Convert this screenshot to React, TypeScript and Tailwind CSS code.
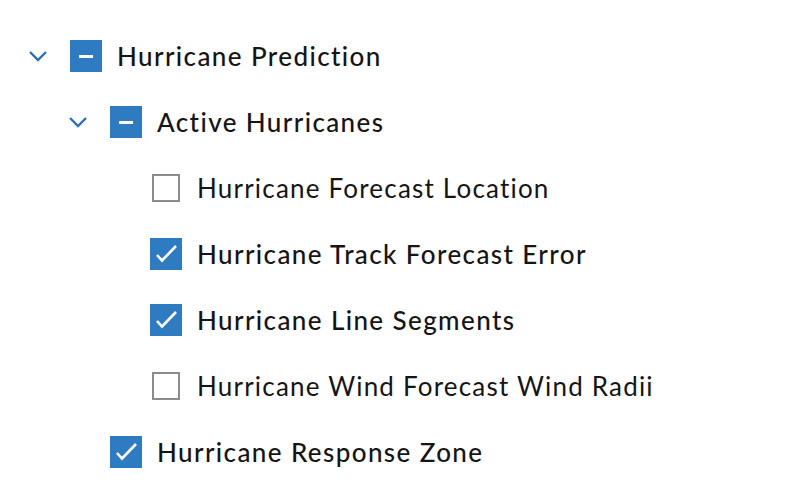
import React from "react";

type State = "checked" | "unchecked" | "mixed";

interface Row {
  label: string;
  level: number;
  state: State;
  expandable?: boolean;
}

const rows: Row[] = [
  { label: "Hurricane Prediction", level: 0, state: "mixed", expandable: true },
  { label: "Active Hurricanes", level: 1, state: "mixed", expandable: true },
  { label: "Hurricane Forecast Location", level: 2, state: "unchecked" },
  { label: "Hurricane Track Forecast Error", level: 2, state: "checked" },
  { label: "Hurricane Line Segments", level: 2, state: "checked" },
  { label: "Hurricane Wind Forecast Wind Radii", level: 2, state: "unchecked" },
  { label: "Hurricane Response Zone", level: 1, state: "checked" },
];

function Chevron() {
  return (
    <svg width="20" height="12" viewBox="0 0 20 12" fill="none" className="text-[#2f6fb5]">
      <path d="M2 2l8 8 8-8" stroke="currentColor" strokeWidth="2.4" />
    </svg>
  );
}

function Box({ state }: { state: State }) {
  if (state === "unchecked") {
    return (
      <div className="w-8 h-8 flex items-center justify-center">
        <div className="w-[28px] h-[28px] border-2 border-[#8c8c8c] bg-white" />
      </div>
    );
  }
  return (
    <div className="w-8 h-8 bg-[#2f7bc1] flex items-center justify-center">
      {state === "checked" ? (
        <svg width="32" height="32" viewBox="0 0 32 32" fill="none">
          <path d="M7 17l5 5.5L26 8" stroke="white" strokeWidth="2.6" />
        </svg>
      ) : (
        <div className="w-[14px] h-[3px] bg-white" />
      )}
    </div>
  );
}

const indent = ["pl-[28px]", "pl-[68px]", "pl-[150px]"];

export default function App() {
  return (
    <div className="w-[800px] h-[490px] bg-white pt-[23px] font-['Lato','Liberation_Sans',sans-serif] text-[26px] text-[#151515]">
      {rows.map((r, i) => {
        const pad = r.level === 1 && !r.expandable ? "pl-[110px]" : indent[r.level];
        return (
          <div key={i} className={`h-[66px] flex items-center ${pad}`}>
            {r.expandable && (
              <div className="w-[20px] mr-[22px] flex items-center">
                <Chevron />
              </div>
            )}
            <Box state={r.state} />
            <span
              className={`ml-[15px] ${
                r.state === "unchecked" ? "font-normal tracking-[1.2px]" : "font-medium tracking-[1.4px]"
              }`}
            >
              {r.label}
            </span>
          </div>
        );
      })}
    </div>
  );
}
